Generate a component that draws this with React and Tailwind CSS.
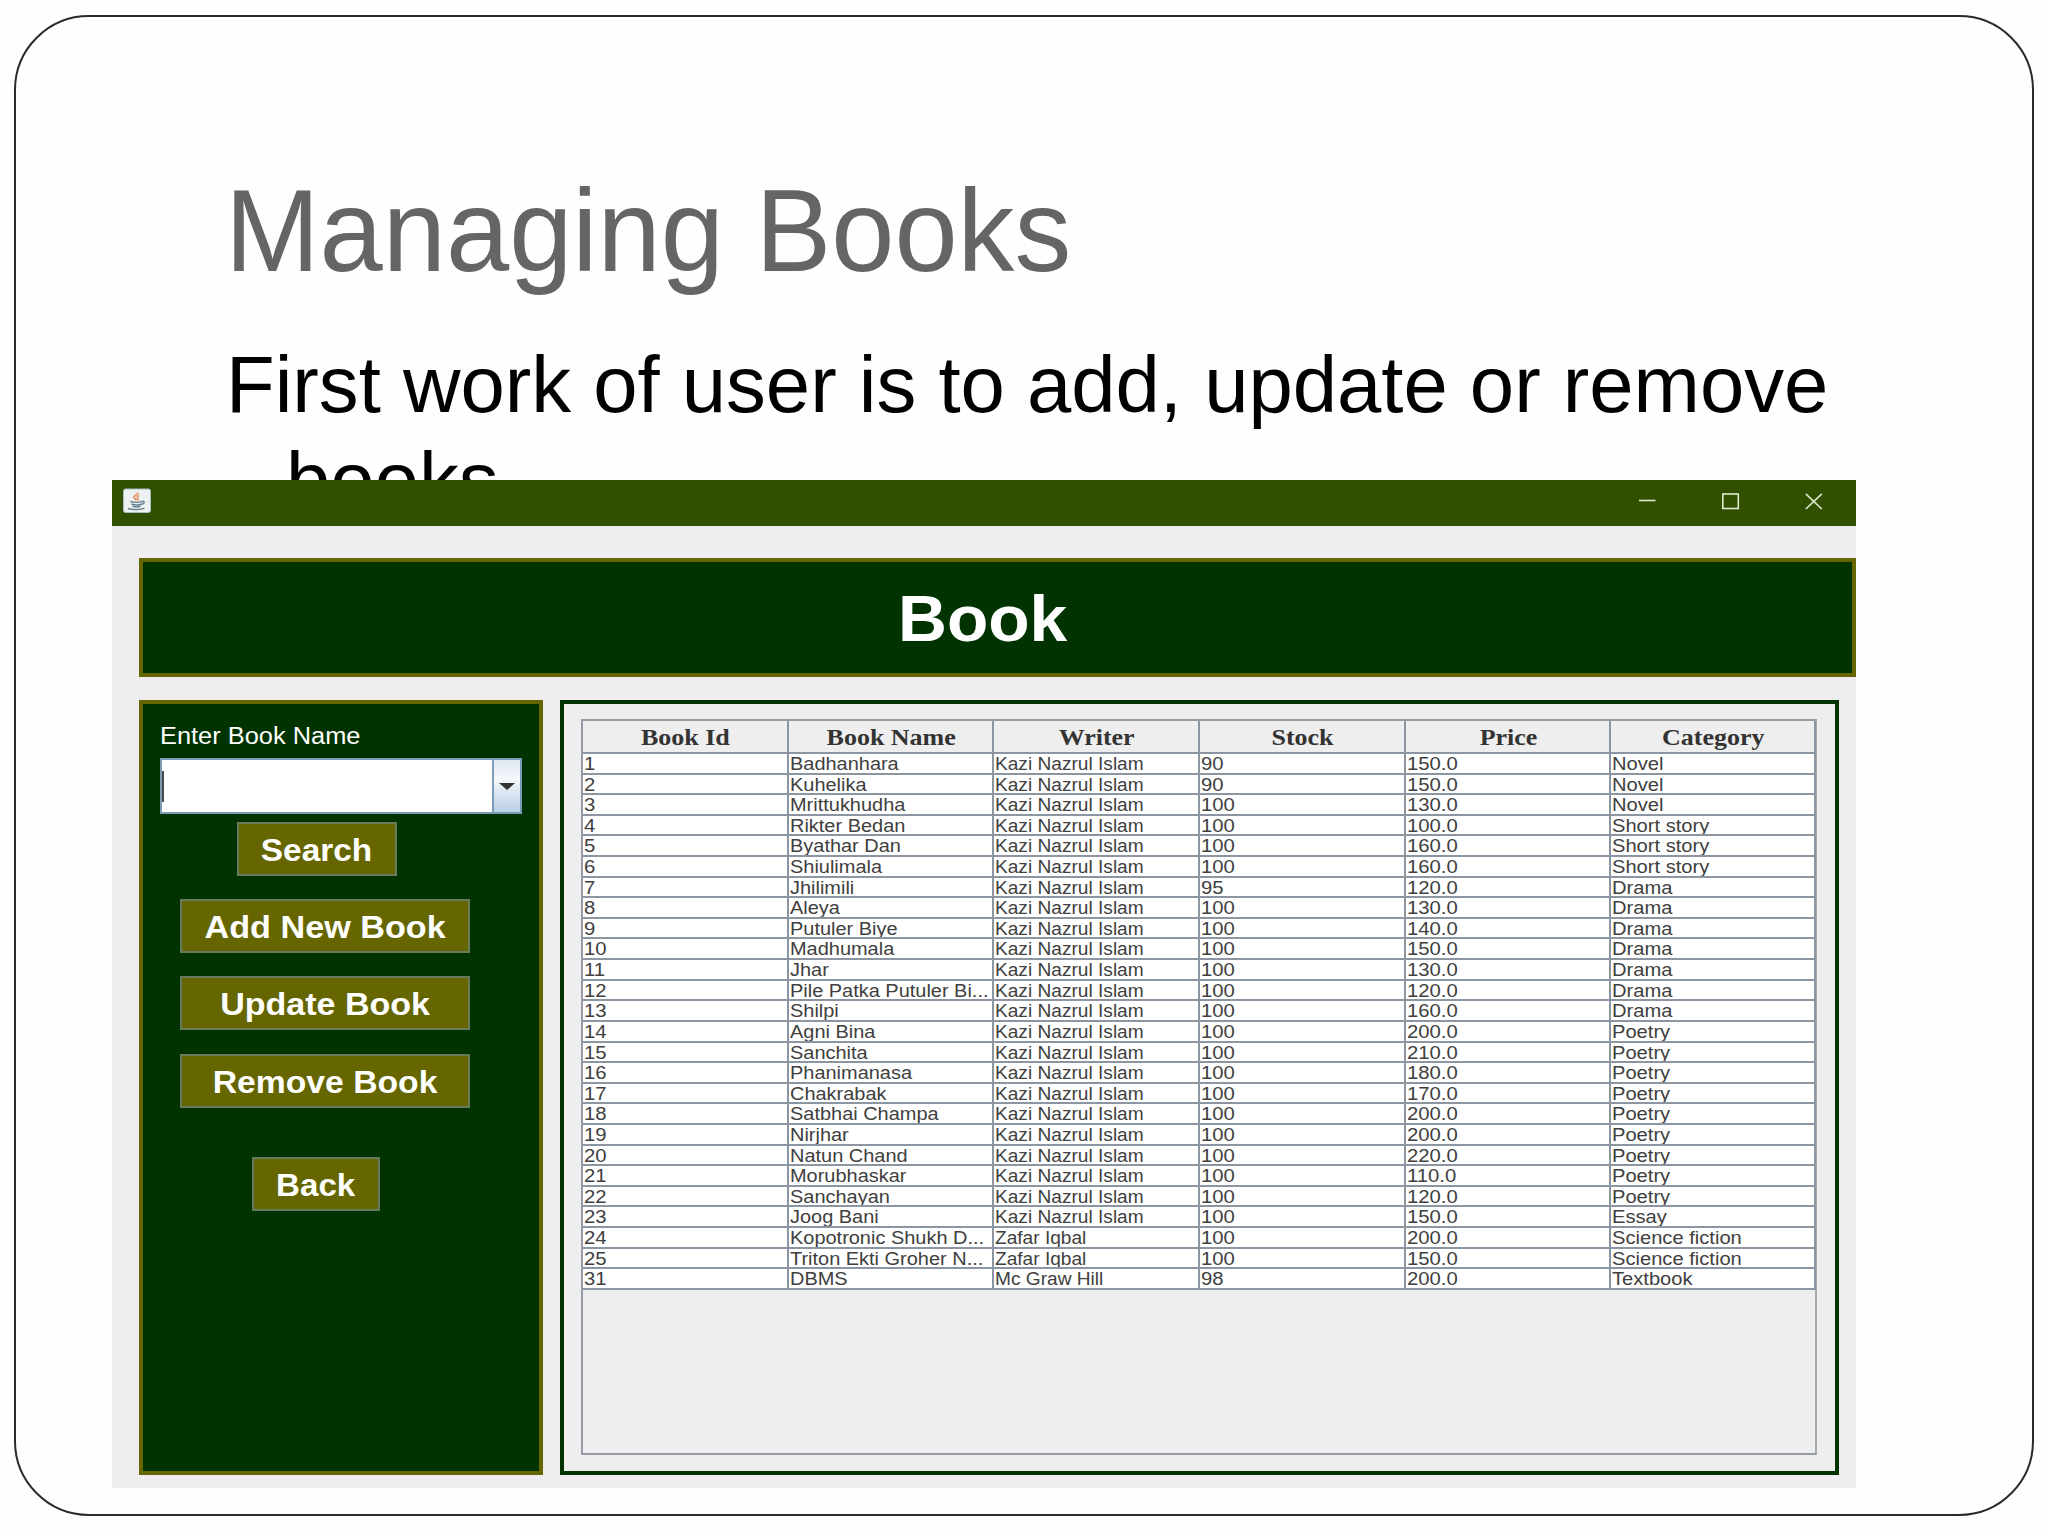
const FONT_SANS = "font-['Liberation_Sans',Arial,sans-serif]"

const columns = ['Book Id', 'Book Name', 'Writer', 'Stock', 'Price', 'Category']

const KNI = 'Kazi Nazrul Islam'

const books = [
    ['1', 'Badhanhara', KNI, '90', '150.0', 'Novel'],
    ['2', 'Kuhelika', KNI, '90', '150.0', 'Novel'],
    ['3', 'Mrittukhudha', KNI, '100', '130.0', 'Novel'],
    ['4', 'Rikter Bedan', KNI, '100', '100.0', 'Short story'],
    ['5', 'Byathar Dan', KNI, '100', '160.0', 'Short story'],
    ['6', 'Shiulimala', KNI, '100', '160.0', 'Short story'],
    ['7', 'Jhilimili', KNI, '95', '120.0', 'Drama'],
    ['8', 'Aleya', KNI, '100', '130.0', 'Drama'],
    ['9', 'Putuler Biye', KNI, '100', '140.0', 'Drama'],
    ['10', 'Madhumala', KNI, '100', '150.0', 'Drama'],
    ['11', 'Jhar', KNI, '100', '130.0', 'Drama'],
    ['12', 'Pile Patka Putuler Bi...', KNI, '100', '120.0', 'Drama'],
    ['13', 'Shilpi', KNI, '100', '160.0', 'Drama'],
    ['14', 'Agni Bina', KNI, '100', '200.0', 'Poetry'],
    ['15', 'Sanchita', KNI, '100', '210.0', 'Poetry'],
    ['16', 'Phanimanasa', KNI, '100', '180.0', 'Poetry'],
    ['17', 'Chakrabak', KNI, '100', '170.0', 'Poetry'],
    ['18', 'Satbhai Champa', KNI, '100', '200.0', 'Poetry'],
    ['19', 'Nirjhar', KNI, '100', '200.0', 'Poetry'],
    ['20', 'Natun Chand', KNI, '100', '220.0', 'Poetry'],
    ['21', 'Morubhaskar', KNI, '100', '110.0', 'Poetry'],
    ['22', 'Sanchayan', KNI, '100', '120.0', 'Poetry'],
    ['23', 'Joog Bani', KNI, '100', '150.0', 'Essay'],
    ['24', 'Kopotronic Shukh D...', 'Zafar Iqbal', '100', '200.0', 'Science fiction'],
    ['25', 'Triton Ekti Groher N...', 'Zafar Iqbal', '100', '150.0', 'Science fiction'],
    ['31', 'DBMS', 'Mc Graw Hill', '98', '200.0', 'Textbook'],
]

// horizontal stretch of the cell text, per column
const cellScale = [
    'scale-x-[1.16]',
    'scale-x-[1.14]',
    'scale-x-[1.092]',
    'scale-x-[1.16]',
    'scale-x-[1.16]',
    'scale-x-[1.15]',
]

function JavaIcon() {
    return (
        <svg width="30" height="26" viewBox="0 0 30 26">
            <rect x="1.500" y="1" width="27" height="23.500" rx="2" fill="#eef1f1" stroke="#a9bcc4" />
            <path d="M15.500 4.500c2 2-4.500 3-3.500 5 .4 1.200 2 1.500 2.200 3M17.500 7.500c-2.500 1-3 2-1.500 3.500.5.6 0 1.200-.6 1.500" fill="none" stroke="#e39a66" strokeWidth="1.800" />
            <path d="M8.500 13.500c3 1 9 1 12 0M9.500 16c3 1 8 1 10.500 0M10.500 18.200c2 .8 6 .8 8 0M20 13.200c3-.5 3 2.500 0 3M6 20.500c4 1.500 13 1.500 16.500-.3" fill="none" stroke="#66808f" strokeWidth="1.400" />
        </svg>
    )
}

function TitleBar() {
    return (
        <div className="flex h-[46px] items-start justify-between bg-[#305000] pl-[10px] pr-[33px]">
            <div className="pt-[8px]">
                <JavaIcon />
            </div>
            <div className="flex gap-[65px] pt-[13px]">
                <svg width="18" height="18" viewBox="0 0 18 18" stroke="#dfe8cf" strokeWidth="1.600" fill="none">
                    <path d="M0 7.500h16.500" />
                </svg>
                <svg width="18" height="18" viewBox="0 0 18 18" stroke="#dfe8cf" strokeWidth="1.600" fill="none">
                    <rect x=".8" y="1" width="15.500" height="14.500" />
                </svg>
                <svg width="18" height="18" viewBox="0 0 18 18" stroke="#dfe8cf" strokeWidth="1.600" fill="none">
                    <path d="M.8.8l16 15.200M16.800.8L.8 16" />
                </svg>
            </div>
        </div>
    )
}

function PanelButton({ className, textClass, children }) {
    return (
        <button className={`flex h-[54px] items-center justify-center border-2 border-[#687a5c] bg-[#666600] pt-[4px] text-[31.500px] font-bold leading-none text-white ${className}`}>
            <span className={`inline-block whitespace-nowrap ${textClass}`}>{children}</span>
        </button>
    )
}

function SidePanel() {
    return (
        <div className="flex h-[775px] w-[404px] flex-col items-start border-4 border-[#666600] bg-[#003300]">
            <div className="ml-[17px] mt-[15px] h-[39px] origin-left scale-x-[1.09] whitespace-nowrap text-[23.300px] leading-[34px] text-white">
                Enter Book Name
            </div>
            <div className="ml-[17px] flex h-[56px] w-[362px] border-2 border-[#7a9ab5] bg-white">
                <div className="flex flex-1 items-center">
                    <div className="h-[31px] w-[2px] bg-[#4a4a4a]" />
                </div>
                <div className="flex w-[28px] items-center justify-center border-l-2 border-[#7f9dba] bg-linear-to-b from-[#dde7f1] via-[#f5f8fb] via-35% to-[#b8cfe5]">
                    <svg width="16" height="7" viewBox="0 0 16 7">
                        <path d="M0 0h16L8 7z" fill="#333" />
                    </svg>
                </div>
            </div>
            <PanelButton className="ml-[94px] mt-[8px] w-[160px]" textClass="scale-x-[1.06]">Search</PanelButton>
            <PanelButton className="ml-[37px] mt-[23px] w-[290px]" textClass="scale-x-[1.085]">Add New Book</PanelButton>
            <PanelButton className="ml-[37px] mt-[23px] w-[290px]" textClass="scale-x-[1.08]">Update Book</PanelButton>
            <PanelButton className="ml-[37px] mt-[24px] w-[290px]" textClass="scale-x-[1.07]">Remove Book</PanelButton>
            <PanelButton className="ml-[109px] mt-[49px] w-[128px]" textClass="scale-x-[1.05]">Back</PanelButton>
        </div>
    )
}

function BookTable() {
    return (
        <div className="h-[775px] w-[1279px] border-4 border-[#003300] bg-[#eeeeee] pl-[17px] pt-[15px]">
            <div className="h-[736px] w-[1236px] border-2 border-[#959ba3] border-r-[#a3a9b0]">
                <div className="grid h-[33px] w-[1233px] grid-cols-[203.600px_repeat(4,205.700px)_1fr] border-b-2 border-r-2 border-[#8c96a3]">
                    {columns.map((c, i) => (
                        <div
                            key={c}
                            className={`flex items-center justify-center border-[#8c96a3] pl-[2px] pt-[2px] font-['Liberation_Serif','Times_New_Roman',serif] text-[23px] font-bold leading-none text-[#333333] ${i > 0 ? 'border-l-2' : ''}`}
                        >
                            <span className="inline-block scale-x-[1.13] whitespace-nowrap">{c}</span>
                        </div>
                    ))}
                </div>
                <div className="w-[1233px] border-r-2 border-[#8c96a3]">
                    {books.map(row => (
                        <div key={row[0]} className="grid h-[20.615px] grid-cols-[203.600px_repeat(4,205.700px)_1fr] overflow-hidden border-b-2 border-[#8c96a3] bg-white">
                            {row.map((cell, i) => (
                                <div
                                    key={i}
                                    className={`border-[#8c96a3] pl-px text-[17.500px] leading-[21px] text-[#404040] ${i > 0 ? 'border-l-2' : ''}`}
                                >
                                    <span className={`inline-block origin-left whitespace-nowrap ${cellScale[i]}`}>{cell}</span>
                                </div>
                            ))}
                        </div>
                    ))}
                </div>
            </div>
        </div>
    )
}

export default function App() {
    return (
        <div className={`h-[1536px] w-[2048px] overflow-hidden bg-[#fefefe] pl-[14px] pt-[15px] ${FONT_SANS}`}>
            <div className="h-[1501px] w-[2020px] rounded-[75px] border-2 border-[#2a2a2a]">
                <div className="h-[463px]">
                    <h1 className="ml-[209px] h-[280px] origin-left whitespace-nowrap pt-[150px] text-[113.600px] leading-[130px] text-[#666464]">
                        <span className="inline-block origin-[50%_80%] scale-y-[1.035]">Managing Books</span>
                    </h1>
                    <p className="ml-[210px] mt-[40px] w-[1680px] pl-[60px] -indent-[60px] text-[79.650px] leading-[96px] text-black">
                        First work of user is to add, update or remove books.
                    </p>
                </div>
                <div className="relative ml-[96px] h-[1008px] w-[1744px] bg-[#efedef]">
                    <TitleBar />
                    <div className="ml-[27px] mt-[32px] flex h-[119px] items-center justify-center border-4 border-[#666600] bg-[#003300] pr-[30px] pt-[3px] text-[64.500px] font-bold leading-none text-white">
                        <span className="inline-block scale-x-[1.05]">Book</span>
                    </div>
                    <div className="ml-[27px] mt-[23px] flex gap-[17px]">
                        <SidePanel />
                        <BookTable />
                    </div>
                </div>
            </div>
        </div>
    )
}
